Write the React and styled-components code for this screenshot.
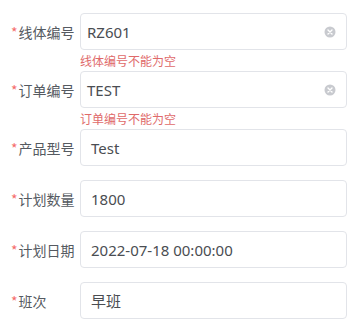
import React from "react";
import styled, { createGlobalStyle } from "styled-components";

const Global = createGlobalStyle`
  html, body { margin: 0; padding: 0; background: #fff; }
  body { font-family: "Noto Sans", "Noto Sans CJK SC", sans-serif; }
`;

const Form = styled.div`
  display: flex;
  flex-direction: column;
  padding: 13px 12px 0 11px;
  width: 359px;
  box-sizing: border-box;
`;

const Row = styled.div`
  display: flex;
  align-items: flex-start;
  margin-bottom: ${(p) => (p.$error ? 0 : 14)}px;
`;

const Label = styled.label`
  width: 69px;
  flex: none;
  height: 37px;
  display: flex;
  align-items: center;
  font-size: 14px;
  color: #555a61;
  font-family: "Noto Sans CJK SC", sans-serif;
`;

const Star = styled.span`
  color: #f56c6c;
  margin-right: 1px;
`;

const Field = styled.div`
  flex: 1;
  display: flex;
  flex-direction: column;
`;

const Box = styled.div`
  height: 37px;
  box-sizing: border-box;
  border: 1px solid #e2e4e9;
  border-radius: 4px;
  display: flex;
  align-items: center;
  padding: 0 10px 0 ${(p) => (p.$clear ? 6 : 10)}px;
  font-size: 15px;
  color: #4a4d52;
  font-family: "Noto Sans", "Noto Sans CJK SC", sans-serif;
`;

const Value = styled.span`
  flex: 1;
`;

const ClearIcon = styled.svg`
  width: 12px;
  height: 12px;
  flex: none;
`;

const Error = styled.div`
  color: #e06a6a;
  font-size: 12px;
  line-height: 14px;
  height: 21px;
  padding-top: 4px;
  box-sizing: border-box;
  font-family: "Noto Sans CJK SC", sans-serif;
`;

const rows = [
  { label: "线体编号", value: "RZ601", clear: true, error: "线体编号不能为空" },
  { label: "订单编号", value: "TEST", clear: true, error: "订单编号不能为空" },
  { label: "产品型号", value: "Test" },
  { label: "计划数量", value: "1800" },
  { label: "计划日期", value: "2022-07-18 00:00:00" },
  { label: "班次", value: "早班" },
];

export default function App() {
  return (
    <>
      <Global />
      <Form>
        {rows.map((r) => (
          <Row key={r.label} $error={!!r.error}>
            <Label>
              <Star>*</Star>
              {r.label}
            </Label>
            <Field>
              <Box $clear={r.clear}>
                <Value>{r.value}</Value>
                {r.clear && (
                  <ClearIcon viewBox="0 0 12 12">
                    <circle cx="6" cy="6" r="5.5" fill="#c8cacf" />
                    <path d="M4 4 L8 8 M8 4 L4 8" stroke="#fff" strokeWidth="1.4" strokeLinecap="round" />
                  </ClearIcon>
                )}
              </Box>
              {r.error && <Error>{r.error}</Error>}
            </Field>
          </Row>
        ))}
      </Form>
    </>
  );
}
